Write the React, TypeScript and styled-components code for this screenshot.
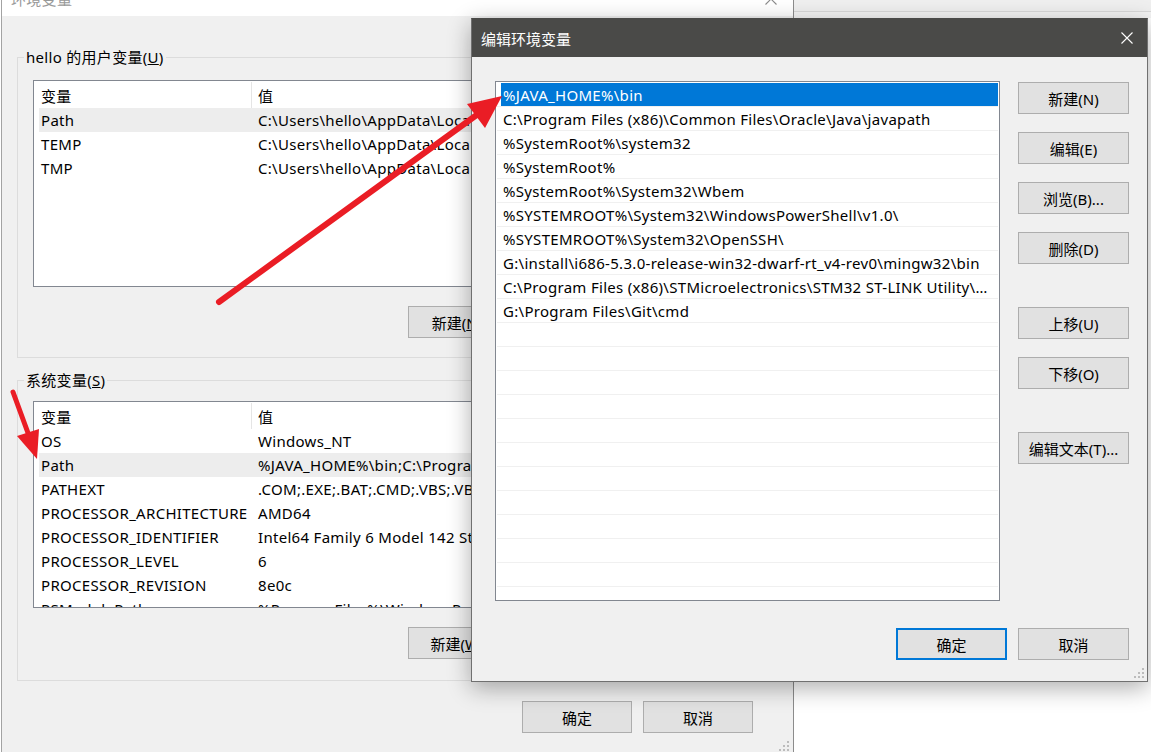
import { createGlobalStyle, styled } from 'styled-components';

const UI_FONT = `"Noto Sans", "Noto Sans CJK SC", sans-serif`;

interface EnvVar {
  name: string;
  value: string;
  hovered?: boolean;
}

const userVars: EnvVar[] = [
  { name: 'Path', value: 'C:\\Users\\hello\\AppData\\Local\\Microsoft\\WindowsApps;', hovered: true },
  { name: 'TEMP', value: 'C:\\Users\\hello\\AppData\\Local\\Temp' },
  { name: 'TMP', value: 'C:\\Users\\hello\\AppData\\Local\\Temp' },
];

const systemVars: EnvVar[] = [
  { name: 'OS', value: 'Windows_NT' },
  { name: 'Path', value: '%JAVA_HOME%\\bin;C:\\Program Files (x86)\\Common Files\\Oracle\\Java\\javapath;', hovered: true },
  { name: 'PATHEXT', value: '.COM;.EXE;.BAT;.CMD;.VBS;.VBE;.JS;.JSE;.WSF;.WSH;.MSC' },
  { name: 'PROCESSOR_ARCHITECTURE', value: 'AMD64' },
  { name: 'PROCESSOR_IDENTIFIER', value: 'Intel64 Family 6 Model 142 Stepping 10, GenuineIntel' },
  { name: 'PROCESSOR_LEVEL', value: '6' },
  { name: 'PROCESSOR_REVISION', value: '8e0c' },
  { name: 'PSModulePath', value: '%ProgramFiles%\\WindowsPowerShell\\Modules;C:\\WINDOWS\\system32' },
];

const pathEntries = [
  '%JAVA_HOME%\\bin',
  'C:\\Program Files (x86)\\Common Files\\Oracle\\Java\\javapath',
  '%SystemRoot%\\system32',
  '%SystemRoot%',
  '%SystemRoot%\\System32\\Wbem',
  '%SYSTEMROOT%\\System32\\WindowsPowerShell\\v1.0\\',
  '%SYSTEMROOT%\\System32\\OpenSSH\\',
  'G:\\install\\i686-5.3.0-release-win32-dwarf-rt_v4-rev0\\mingw32\\bin',
  'C:\\Program Files (x86)\\STMicroelectronics\\STM32 ST-LINK Utility\\ST-LINK Utility',
  'G:\\Program Files\\Git\\cmd',
];

const PATH_ROWS = 22;

const GlobalStyle = createGlobalStyle`
  html, body {
    margin: 0;
    padding: 0;
  }
  body {
    width: 1151px;
    height: 752px;
    overflow: hidden;
    background: #ffffff;
    font-family: ${UI_FONT};
    font-size: 15px;
    letter-spacing: 0.3px;
    color: #000000;
  }
`;

const ResizeGrip = () => (
  <GripSvg width="12" height="12" viewBox="0 0 12 12">
    <g fill="#bcbcbc">
      <rect x="9" y="1" width="2" height="2" />
      <rect x="5" y="5" width="2" height="2" />
      <rect x="9" y="5" width="2" height="2" />
      <rect x="1" y="9" width="2" height="2" />
      <rect x="5" y="9" width="2" height="2" />
      <rect x="9" y="9" width="2" height="2" />
    </g>
  </GripSvg>
);

const CloseGlyph = ({ color }: { color: string }) => (
  <svg width="12" height="12" viewBox="0 0 12 12">
    <path d="M0.5 0.5 L11.5 11.5 M11.5 0.5 L0.5 11.5" stroke={color} strokeWidth="1.1" fill="none" />
  </svg>
);

const VarTable = ({ vars }: { vars: EnvVar[] }) => (
  <VarList>
    <VarHeader>
      <HeaderCell $divider>变量</HeaderCell>
      <HeaderCell>值</HeaderCell>
    </VarHeader>
    {vars.map((v) => (
      <VarRow key={v.name} $hovered={v.hovered}>
        <NameCell>{v.name}</NameCell>
        <ValueCell>{v.value}</ValueCell>
      </VarRow>
    ))}
  </VarList>
);

const App = () => {
  const rows = Array.from({ length: PATH_ROWS }, (_, i) => pathEntries[i] ?? '');

  return (
    <Desktop>
      <GlobalStyle />
      <BehindWindow />

      <EnvWindow>
        <LightTitleBar>
          <span>环境变量</span>
          <CloseSlot>
            <CloseGlyph color="#8a8a8a" />
          </CloseSlot>
        </LightTitleBar>
        <EnvBody>
          <GroupBox $top={13} $bottom={19}>
            <GroupLegend>
              hello 的用户变量(<u>U</u>)
            </GroupLegend>
            <VarTable vars={userVars} />
            <GroupButtons>
              <PushButton $width={110}>
                新建(<u>N</u>)...
              </PushButton>
              <PushButton $width={110}>
                编辑(<u>E</u>)...
              </PushButton>
              <PushButton $width={110}>
                删除(<u>D</u>)
              </PushButton>
            </GroupButtons>
          </GroupBox>

          <GroupBox $top={11} $bottom={21} style={{ marginTop: 12 }}>
            <GroupLegend>
              系统变量(<u>S</u>)
            </GroupLegend>
            <VarTable vars={systemVars} />
            <GroupButtons>
              <PushButton $width={110}>
                新建(<u>W</u>)...
              </PushButton>
              <PushButton $width={110}>
                编辑(<u>I</u>)...
              </PushButton>
              <PushButton $width={110}>
                删除(<u>L</u>)
              </PushButton>
            </GroupButtons>
          </GroupBox>

          <WindowButtons>
            <PushButton $width={110}>确定</PushButton>
            <PushButton $width={110}>取消</PushButton>
          </WindowButtons>
        </EnvBody>
        <GripCorner>
          <ResizeGrip />
        </GripCorner>
      </EnvWindow>

      <EditDialog>
        <DarkTitleBar>
          <span>编辑环境变量</span>
          <CloseSlot $dark>
            <CloseGlyph color="#ffffff" />
          </CloseSlot>
        </DarkTitleBar>
        <DialogBody>
          <DialogMain>
            <PathList>
              {rows.map((entry, i) => (
                <PathRow key={i} $selected={i === 0}>
                  {entry}
                </PathRow>
              ))}
            </PathList>
            <SideButtons>
              <PushButton>新建(N)</PushButton>
              <PushButton $gap={18}>编辑(E)</PushButton>
              <PushButton $gap={18}>浏览(B)...</PushButton>
              <PushButton $gap={18}>删除(D)</PushButton>
              <PushButton $gap={43}>上移(U)</PushButton>
              <PushButton $gap={18}>下移(O)</PushButton>
              <PushButton $gap={43}>编辑文本(T)...</PushButton>
            </SideButtons>
          </DialogMain>
          <DialogFooter>
            <PushButton $focused>确定</PushButton>
            <PushButton>取消</PushButton>
          </DialogFooter>
        </DialogBody>
        <GripCorner $inset={2}>
          <ResizeGrip />
        </GripCorner>
      </EditDialog>

      <Annotation width="1151" height="752" viewBox="0 0 1151 752">
        <g fill="#ea1d25" stroke="#ea1d25" strokeLinecap="round">
          <line x1="219" y1="302" x2="478" y2="114" strokeWidth="6" />
          <polygon points="502,96 467,104 485,128" stroke="none" />
          <line x1="13" y1="392" x2="28" y2="433" strokeWidth="5" />
          <polygon points="37,459 17,436 39,429" stroke="none" />
        </g>
      </Annotation>
    </Desktop>
  );
};

const Desktop = styled.div`
  position: relative;
  width: 1151px;
  height: 752px;
  overflow: hidden;
  background: #ffffff;
`;

const BehindWindow = styled.div`
  position: absolute;
  left: 794px;
  top: 0;
  right: 0;
  height: 18px;
  background: linear-gradient(#efefef 0 11px, #d9d9d9 11px 12px, #f4f4f4 12px);
`;

const EnvWindow = styled.section`
  position: absolute;
  left: 1px;
  top: -20px;
  width: 793px;
  height: 774px;
  box-sizing: border-box;
  display: flex;
  flex-direction: column;
  background: #f0f0f0;
  border: 1px solid #a3a3a3;
  border-right-color: #8c8c8c;
`;

const LightTitleBar = styled.header`
  flex: none;
  height: 35px;
  display: flex;
  align-items: center;
  justify-content: space-between;
  padding-left: 9px;
  background: #ffffff;
  color: #999999;
  font-size: 15px;
`;

const CloseSlot = styled.span<{ $dark?: boolean }>`
  display: flex;
  align-items: center;
  justify-content: center;
  width: ${({ $dark }) => ($dark ? '40px' : '28px')};
  height: 100%;
  margin-right: ${({ $dark }) => ($dark ? '0' : '8px')};
`;

const EnvBody = styled.div`
  flex: 1;
  display: flex;
  flex-direction: column;
  padding: 31px 15px 0 15px;
`;

const GroupBox = styled.fieldset<{ $top: number; $bottom: number }>`
  margin: 0;
  min-width: 0;
  padding: ${({ $top, $bottom }) => `${$top}px 15px ${$bottom}px 15px`};
  border: 1px solid #dcdcdc;
`;

const GroupLegend = styled.legend`
  margin-left: -9px;
  padding: 0 2px;
  line-height: 20px;
  font-size: 15px;
`;

const VarList = styled.div`
  height: 207px;
  box-sizing: border-box;
  border: 1px solid #828790;
  background: #ffffff;
  overflow: hidden;
`;

const VarHeader = styled.div`
  display: grid;
  grid-template-columns: 218px 1fr;
  height: 27px;
`;

const HeaderCell = styled.div<{ $divider?: boolean }>`
  display: flex;
  align-items: center;
  padding-left: ${({ $divider }) => ($divider ? '7px' : '6px')};
  border-right: ${({ $divider }) => ($divider ? '1px solid #e5e5e5' : 'none')};
  margin-top: 1px;
`;

const VarRow = styled.div<{ $hovered?: boolean }>`
  display: grid;
  grid-template-columns: 212px 1fr;
  height: 24px;
  margin-left: 5px;
  align-items: center;
  background: ${({ $hovered }) => ($hovered ? '#ededed' : 'transparent')};
`;

const NameCell = styled.div`
  padding-left: 2px;
  white-space: nowrap;
  overflow: hidden;
`;

const ValueCell = styled.div`
  padding-left: 7px;
  white-space: nowrap;
  overflow: hidden;
`;

const GroupButtons = styled.div`
  display: flex;
  justify-content: flex-end;
  gap: 11px;
  margin-top: 19px;
  padding-right: 2px;
`;

const WindowButtons = styled.div`
  display: flex;
  justify-content: flex-end;
  gap: 11px;
  margin-top: 20px;
  padding-right: 25px;
`;

const PushButton = styled.button<{ $width?: number; $gap?: number; $focused?: boolean }>`
  flex: none;
  box-sizing: border-box;
  width: ${({ $width }) => $width ?? 111}px;
  height: 32px;
  margin: ${({ $gap }) => $gap ?? 0}px 0 0 0;
  padding: 0;
  background: #e1e1e1;
  border: ${({ $focused }) => ($focused ? '2px solid #0078d7' : '1px solid #adadad')};
  font-family: ${UI_FONT};
  font-size: 15px;
  color: #000000;
  white-space: nowrap;
`;

const GripCorner = styled.div<{ $inset?: number }>`
  position: absolute;
  right: ${({ $inset }) => $inset ?? 3}px;
  bottom: ${({ $inset }) => $inset ?? 1}px;
`;

const GripSvg = styled.svg`
  display: block;
`;

const EditDialog = styled.section`
  position: absolute;
  left: 471px;
  top: 18px;
  width: 677px;
  height: 664px;
  box-sizing: border-box;
  display: flex;
  flex-direction: column;
  background: #f0f0f0;
  border: 1px solid #707070;
  border-top-color: #4a4a48;
  box-shadow: 0 6px 22px rgba(0, 0, 0, 0.32);
  z-index: 2;
`;

const DarkTitleBar = styled.header`
  flex: none;
  height: 38px;
  display: flex;
  align-items: center;
  justify-content: space-between;
  padding-left: 9px;
  background: #4a4a48;
  color: #ffffff;
  font-size: 15px;
  letter-spacing: 0;
`;

const DialogBody = styled.div`
  flex: 1;
  display: flex;
  flex-direction: column;
  padding: 24px 18px 21px 23px;
`;

const DialogMain = styled.div`
  display: flex;
  gap: 18px;
`;

const PathList = styled.div`
  width: 505px;
  height: 520px;
  box-sizing: border-box;
  padding: 1px;
  display: flex;
  flex-direction: column;
  border: 1px solid #828790;
  background: #ffffff;
  overflow: hidden;
`;

const PathRow = styled.div<{ $selected?: boolean }>`
  flex: none;
  height: 24px;
  box-sizing: border-box;
  padding: 1px 4px 0 6px;
  line-height: 22px;
  border-bottom: 1px solid #f0f0f0;
  white-space: nowrap;
  overflow: hidden;
  text-overflow: ellipsis;
  color: ${({ $selected }) => ($selected ? '#ffffff' : '#000000')};
  background: ${({ $selected }) =>
    $selected ? 'linear-gradient(to right, transparent 4px, #0078d7 4px)' : 'transparent'};
`;

const SideButtons = styled.div`
  display: flex;
  flex-direction: column;
  padding-top: 1px;
`;

const DialogFooter = styled.div`
  display: flex;
  justify-content: flex-end;
  gap: 11px;
  margin-top: auto;
`;

const Annotation = styled.svg`
  position: absolute;
  left: 0;
  top: 0;
  z-index: 10;
  pointer-events: none;
`;

export default App;
